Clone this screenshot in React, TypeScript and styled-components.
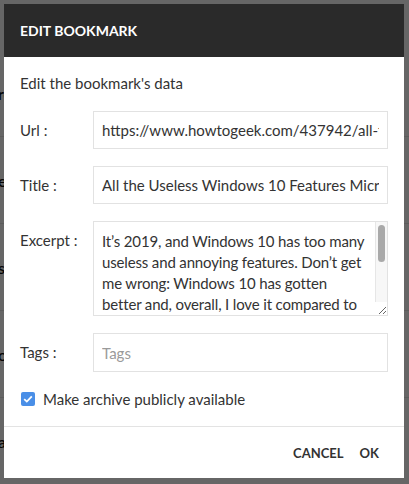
import { FC } from 'react'
import styled, { createGlobalStyle } from 'styled-components'

const GlobalStyle = createGlobalStyle`
  html, body {
    margin: 0;
    padding: 0;
    background: #ffffff;
    font-family: Lato, 'Noto Sans', sans-serif;
    color: #232323;
  }
  * {
    box-sizing: border-box;
  }
`

const Page = styled.div`
  position: relative;
  width: 409px;
  height: 484px;
  overflow: hidden;
`

const BackList = styled.div`
  display: flex;
  flex-direction: column;
  padding-top: 50px;
`

const BackRow = styled.div`
  height: 87px;
  display: flex;
  align-items: center;
  border-bottom: 1px solid #e5e5e5;
`

const BackTitle = styled.span`
  margin-left: -2px;
  font-size: 16px;
  font-weight: 600;
  color: #111;
  white-space: nowrap;
`

const Overlay = styled.div`
  position: absolute;
  inset: 0;
  background: rgba(0, 0, 0, 0.6);
  display: flex;
  align-items: flex-start;
  justify-content: flex-start;
  padding: 4px;
`

const Modal = styled.div`
  width: 400px;
  background: #fff;
  display: flex;
  flex-direction: column;
`

const Header = styled.div`
  height: 53px;
  background: #2a2a2a;
  color: #fff;
  display: flex;
  align-items: center;
  padding: 0 16px;
  font-size: 14px;
  font-weight: 700;
  text-transform: uppercase;
`

const Body = styled.div`
  padding: 16px 16px 17px;
  display: flex;
  flex-direction: column;
`

const Intro = styled.p`
  margin: 0 0 18px;
  font-size: 15px;
  line-height: 20px;
  color: #333;
`

const Fields = styled.div`
  display: grid;
  grid-template-columns: 73px 295px;
  row-gap: 17px;
`

const Label = styled.label`
  font-size: 15px;
  line-height: 20px;
  padding-top: 9px;
  color: #333;
`

const Input = styled.input<{ $h?: number }>`
  height: ${(p) => p.$h ?? 38}px;
  width: 100%;
  border: 1px solid #e2e2e2;
  padding: 0 8px;
  font-family: inherit;
  font-size: 15px;
  color: #333;
  outline: none;

  &::placeholder {
    color: #9a9a9a;
  }
`

const AreaWrap = styled.div`
  position: relative;
  height: 95px;
`

const TextArea = styled.textarea`
  display: block;
  height: 95px;
  width: 100%;
  border: 1px solid #e2e2e2;
  padding: 9px 21px 9px 8px;
  font-family: inherit;
  font-size: 15px;
  letter-spacing: -0.15px;
  line-height: 21px;
  color: #333;
  outline: none;
  resize: vertical;
  overflow-y: scroll;
  scrollbar-width: none;
`

const ScrollTrack = styled.div`
  position: absolute;
  top: 1px;
  right: 1px;
  bottom: 14px;
  width: 12px;
  background: #f7f7f7;
  border-left: 1px solid #e6e6e6;
  pointer-events: none;
`

const ScrollThumb = styled.div`
  margin: 3px 0 0 2px;
  width: 7px;
  height: 37px;
  border-radius: 4px;
  background: #a9a9a9;
`

const CheckRow = styled.label`
  display: flex;
  align-items: center;
  gap: 8px;
  margin-top: 17px;
  font-size: 15px;
  line-height: 20px;
  color: #333;
`

const Box = styled.span<{ $checked?: boolean }>`
  width: 14px;
  height: 14px;
  margin-left: 1px;
  border-radius: 2px;
  background: ${(p) => (p.$checked ? '#4a8fe7' : '#fff')};
  display: flex;
  align-items: center;
  justify-content: center;
`

const Footer = styled.div`
  height: 52px;
  border-top: 1px solid #e3e3e3;
  display: flex;
  align-items: center;
  justify-content: flex-end;
  padding: 0 17px 0 0;
`

const Button = styled.button`
  background: none;
  border: none;
  padding: 4px 8px;
  font-family: inherit;
  font-size: 13px;
  font-weight: 700;
  color: #333;
  text-transform: uppercase;
  cursor: pointer;
`

const EXCERPT =
  'It’s 2019, and Windows 10 has too many useless and annoying features. Don’t get me wrong: Windows 10 has gotten better and, overall, I love it compared to Windows 7 and Windows 8. Here are the features we wish Microsoft would remove.'

const BACK_TITLES = ['remove', 'every', 'some', 'open', 'about']

const App: FC = () => (
  <>
    <GlobalStyle />
    <Page>
      <BackList>
        {BACK_TITLES.map((t) => (
          <BackRow key={t}>
            <BackTitle>{t}</BackTitle>
          </BackRow>
        ))}
      </BackList>
      <Overlay>
        <Modal>
          <Header>Edit bookmark</Header>
          <Body>
            <Intro>Edit the bookmark's data</Intro>
            <Fields>
              <Label>Url :</Label>
              <Input defaultValue='https://www.howtogeek.com/437942/all-the-useless-windows-10-features-microsoft-should-remove/' />
              <Label>Title :</Label>
              <Input defaultValue='All the Useless Windows 10 Features Microsoft Should Remove' />
              <Label>Excerpt :</Label>
              <AreaWrap>
                <TextArea defaultValue={EXCERPT} />
                <ScrollTrack>
                  <ScrollThumb />
                </ScrollTrack>
              </AreaWrap>
              <Label>Tags :</Label>
              <Input $h={39} placeholder='Tags' />
            </Fields>
            <CheckRow>
              <Box $checked>
                <svg width='10' height='8' viewBox='0 0 10 8'>
                  <path d='M1.2 4.2 L3.8 6.6 L8.8 1.4' fill='none' stroke='#fff' strokeWidth='1.8' />
                </svg>
              </Box>
              Make archive publicly available
            </CheckRow>
          </Body>
          <Footer>
            <Button>Cancel</Button>
            <Button>Ok</Button>
          </Footer>
        </Modal>
      </Overlay>
    </Page>
  </>
)

export default App
